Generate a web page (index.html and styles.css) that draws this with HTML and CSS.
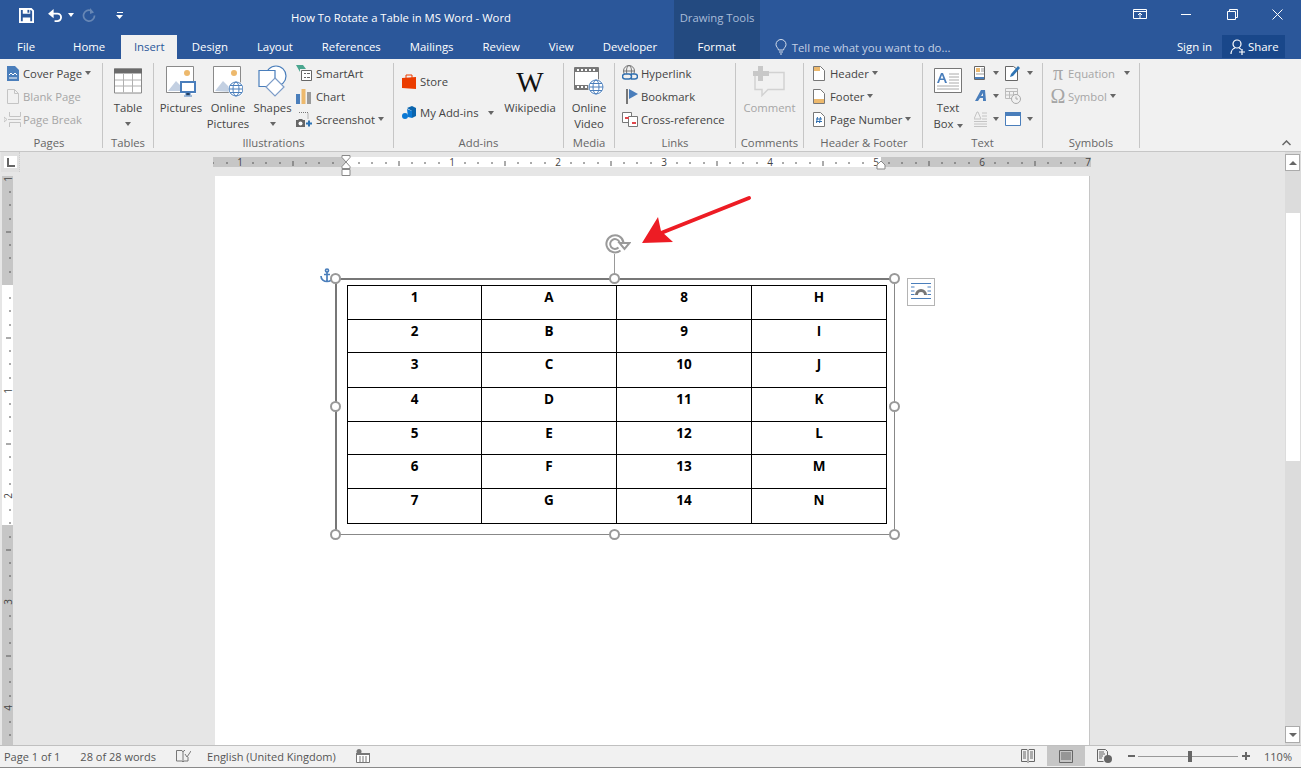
FILE: index.html
```html
<!DOCTYPE html>
<html lang="en">
<head>
  <meta charset="UTF-8">
  <title>How To Rotate a Table in MS Word - Word</title>
  <link rel="stylesheet" href="styles.css">
</head>
<body>
  <div class="titlebar">
    <div class="qat">
      <svg class="qat-save" width="15" height="15" viewBox="0 0 16 16"><path d="M1 1h12l2 2v12H1z" fill="none" stroke="#fff" stroke-width="2"/><path d="M4 1h8v5H4zM4 10h8v5H4z" fill="#fff"/><path d="M9 2h2v3H9z" fill="#2b579a"/></svg>
      <svg class="qat-undo" width="15" height="13" viewBox="0 0 16 14"><path d="M2 5h8a4 4 0 0 1 0 8H7" fill="none" stroke="#fff" stroke-width="2"/><path d="M6 0v10L0 5z" fill="#fff"/></svg>
      <span class="caret caret-white qat-caret"></span>
      <svg class="qat-redo" width="14" height="14" viewBox="0 0 14 14"><path d="M9 2.500a5.500 5.500 0 1 0 3.500 5" fill="none" stroke="#6787b5" stroke-width="1.700"/><path d="M8 0v6l4-1.500z" fill="#6787b5"/></svg>
      <svg class="qat-more" width="8" height="8" viewBox="0 0 8 8"><path d="M1 1h6v1H1zM0 4h7L3.500 8z" fill="#fff"/></svg>
    </div>
    <div class="doc-title">How To Rotate a Table in MS Word - Word</div>
    <div class="context-title">Drawing Tools</div>
    <div class="window-buttons">
      <svg width="14" height="11" viewBox="0 0 14 11"><path d="M.5.500h13v9H.5zM1 2.500h12M7 9V4.500M5 6l2-2 2 2" fill="none" stroke="#fff"/></svg>
      <svg width="11" height="11" viewBox="0 0 11 11"><path d="M0 5.500h10" stroke="#fff"/></svg>
      <svg width="11" height="11" viewBox="0 0 11 11"><path d="M.5 2.500h8v8h-8zM2.500 2V.500h8v8H9" fill="none" stroke="#fff"/></svg>
      <svg width="11" height="11" viewBox="0 0 11 11"><path d="M.5.500l10 10M10.500.500l-10 10" stroke="#fff"/></svg>
    </div>
  </div>

  <div class="tabs">
    <span class="tab tab-file">File</span>
    <span class="tab">Home</span>
    <span class="tab active">Insert</span>
    <span class="tab">Design</span>
    <span class="tab">Layout</span>
    <span class="tab">References</span>
    <span class="tab">Mailings</span>
    <span class="tab">Review</span>
    <span class="tab">View</span>
    <span class="tab">Developer</span>
    <span class="tab tab-format">Format</span>
    <span class="tell-me">
      <svg width="12" height="16" viewBox="0 0 12 16"><path d="M3.500 11C3 8.500 1 8 1 5.500a5 5 0 0 1 10 0C11 8 9 8.500 8.500 11zM4 13h4M5 15h2" fill="none" stroke="#d5deeb"/></svg>
      Tell me what you want to do...
    </span>
    <span class="sign-in">Sign in</span>
    <span class="share">
      <svg width="15" height="16" viewBox="0 0 15 16"><circle cx="7" cy="5" r="4" fill="none" stroke="#fff" stroke-width="1.200"/><path d="M1 15c0-3 2-5.500 4-6M9 9c.8.300 1.500.800 2 1.500M9 13h6M12 10v6" fill="none" stroke="#fff" stroke-width="1.200"/></svg>
      Share
    </span>
  </div>

  <div class="ribbon">
    <div class="group group-pages">
      <div class="group-body">
        <div class="stack">
          <div class="small"><svg class="ico" width="12" height="15" viewBox="0 0 12 15"><path d="M0 0h8l4 4v11H0z" fill="#4a7ebb"/><path d="M2 9l2-2 2 2 2-2 2 2M2 12h8" fill="none" stroke="#fff"/></svg>Cover Page<span class="caret"></span></div>
          <div class="small off"><svg class="ico" width="12" height="15" viewBox="0 0 12 15"><path d="M.5.500h7l4 4v10H.500z" fill="none" stroke="#c4c4c4"/><path d="M7.500.500v4h4" fill="none" stroke="#c4c4c4"/></svg>Blank Page</div>
          <div class="small off"><svg class="ico ico-break" width="18" height="15" viewBox="0 0 18 15"><path d="M5.500 0v4.500h11V0M5.500 15v-4.500h11V15M4 7.500h13M0 5l3 2.500L0 10z" fill="none" stroke="#c4c4c4"/></svg>Page Break</div>
        </div>
      </div>
      <div class="group-label">Pages</div>
    </div>

    <div class="group group-tables">
      <div class="group-body center">
        <div class="large">
          <svg class="big" width="28" height="25" viewBox="0 0 28 25"><path d="M.5.500h27v24H.5z" fill="#fff" stroke="#8a8a8a"/><path d="M0 0h28v5H0z" fill="#6a6a6a"/><path d="M9.500 5v19M18.500 5v19M1 11.500h26M1 17.500h26" stroke="#b0b0b0"/></svg>
          <span>Table</span>
          <span class="caret caret-line"></span>
        </div>
      </div>
      <div class="group-label">Tables</div>
    </div>

    <div class="group group-illus">
      <div class="group-body">
        <div class="large large-pictures">
          <svg class="big" width="30" height="32" viewBox="0 0 30 32"><path d="M.5.500h27v26H.5z" fill="#fff" stroke="#8a8a8a"/><circle cx="21" cy="7" r="3" fill="#edb96d"/><path d="M2 25l8-10 6 6 3-2 3 6z" fill="#c3d0e2"/><path d="M14 15h16v13H14z" fill="#fff"/><path d="M15 16h14v10H15z" fill="#fff" stroke="#4a7ebb" stroke-width="2"/><path d="M20 29h4v-2h-4zM18 30h8" stroke="#4a7ebb"/></svg>
          <span>Pictures</span>
        </div>
        <div class="large large-online">
          <svg class="big" width="30" height="32" viewBox="0 0 30 32"><path d="M.5.500h27v26H.5z" fill="#fff" stroke="#8a8a8a"/><circle cx="21" cy="7" r="3" fill="#edb96d"/><path d="M2 25l8-10 6 6 3 5z" fill="#c3d0e2"/><circle cx="23" cy="23" r="8" fill="#fff"/><g fill="none" stroke="#4a7ebb"><circle cx="23" cy="23" r="7"/><ellipse cx="23" cy="23" rx="3" ry="7"/><path d="M16 23h14M17 19.500h12M17 26.500h12"/></g></svg>
          <span>Online</span><span>Pictures</span>
        </div>
        <div class="large large-shapes">
          <svg class="big" width="30" height="32" viewBox="0 0 30 32"><circle cx="18" cy="11" r="10" fill="#fff" stroke="#4a7ebb" stroke-width="1.200"/><path d="M1 5.500h16v16H1z" fill="#fff" stroke="#4a7ebb" stroke-width="1.200"/><path d="M17 13l9 9-9 9-9-9z" fill="#fff" stroke="#7c9cc8" stroke-width="1.200"/></svg>
          <span>Shapes</span>
          <span class="caret caret-line"></span>
        </div>
        <div class="stack">
          <div class="small"><svg class="ico" width="16" height="16" viewBox="0 0 16 16"><path d="M0 0h7l3 4H4v3z" fill="#4aa68f"/><path d="M5.500 5.500h10v10h-10z" fill="#fff" stroke="#666"/><path d="M8 8.500h2M11 8.500h3M8 12.500h2M11 12.500h3" stroke="#666"/></svg>SmartArt</div>
          <div class="small"><svg class="ico ico-15" width="15" height="15" viewBox="0 0 15 15"><path d="M0 5h4v10H0z" fill="#4a7ebb"/><path d="M5.500 0h4v15h-4z" fill="#edb96d"/><path d="M11 3h4v12h-4z" fill="#9a9a9a"/></svg>Chart</div>
          <div class="small"><svg class="ico" width="16" height="15" viewBox="0 0 16 15"><path d="M3 .500h9v6" fill="none" stroke="#777" stroke-dasharray="1 1"/><path d="M0 8h2l1-1h3l1 1h2v7H0z" fill="#666"/><circle cx="4.500" cy="11.500" r="2" fill="#fff"/><path d="M10 11.500h6M13 8.500v6" stroke="#2f75b5" stroke-width="2"/></svg>Screenshot<span class="caret"></span></div>
        </div>
      </div>
      <div class="group-label">Illustrations</div>
    </div>

    <div class="group group-addins">
      <div class="group-body">
        <div class="stack stack-addins">
          <div class="small"><svg class="ico" width="14" height="16" viewBox="0 0 14 16"><path d="M0 4l14-1v12L0 14z" fill="#eb3c00"/><path d="M4 4V1h6v3" fill="none" stroke="#eb3c00"/></svg>Store</div>
          <div class="small"><svg class="ico" width="14" height="14" viewBox="0 0 14 14"><path d="M5 2l5-2 4 2v8l-4 2V5z" fill="#0a64ad"/><path d="M5 3l5 2v7L6 11z" fill="#0a78d4"/><circle cx="3" cy="10" r="3" fill="#0a78d4"/></svg>My Add-ins<span class="caret caret-far"></span></div>
        </div>
        <div class="large large-wiki">
          <div class="wiki-w">W</div>
          <span>Wikipedia</span>
        </div>
      </div>
      <div class="group-label">Add-ins</div>
    </div>

    <div class="group group-media">
      <div class="group-body center">
        <div class="large">
          <svg class="big" width="30" height="28" viewBox="0 0 30 28"><path d="M.5.500h24v22H.5z" fill="#fff" stroke="#777"/><path d="M1 1h23v4H1zM1 18h23v4H1z" fill="#777"/><path d="M3 2h2v2H3zM7 2h2v2H7zM11 2h2v2h-2zM15 2h2v2h-2zM19 2h2v2h-2zM3 19h2v2H3zM7 19h2v2H7zM11 19h2v2h-2z" fill="#fff"/><circle cx="22" cy="20" r="8" fill="#fff"/><g fill="none" stroke="#4a7ebb"><circle cx="22" cy="20" r="7"/><ellipse cx="22" cy="20" rx="3" ry="7"/><path d="M15 20h14M16 16.500h12M16 23.500h12"/></g></svg>
          <span>Online</span><span>Video</span>
        </div>
      </div>
      <div class="group-label">Media</div>
    </div>

    <div class="group group-links">
      <div class="group-body">
        <div class="stack">
          <div class="small"><svg class="ico ico-link" width="16" height="16" viewBox="0 0 16 16"><g fill="none" stroke="#777"><circle cx="7" cy="6" r="5.500"/><ellipse cx="7" cy="6" rx="2.500" ry="5.500"/><path d="M1.500 6h11"/></g><path d="M3 9h4a2.500 2.500 0 0 1 0 5H3a2.500 2.500 0 0 1 0-5zM9 9h4a2.500 2.500 0 0 1 0 5H9" fill="#f1f1f1" stroke="#2f6fb0" stroke-width="1.500"/></svg>Hyperlink</div>
          <div class="small"><svg class="ico ico-bookmark" width="14" height="16" viewBox="0 0 14 16"><path d="M2 1v15" stroke="#777" stroke-width="2"/><path d="M4 1l9 5-9 5z" fill="#4a7ebb"/></svg>Bookmark</div>
          <div class="small"><svg class="ico ico-link" width="16" height="15" viewBox="0 0 16 15"><path d="M.5.500h9v10h-9z" fill="#fff" stroke="#777"/><path d="M6.500 4.500h9v10h-9z" fill="#fff" stroke="#777"/><path d="M3 5h4v2H3zM10 10h4v2h-4z" fill="#e0474c"/></svg>Cross-reference</div>
        </div>
      </div>
      <div class="group-label">Links</div>
    </div>

    <div class="group group-comments">
      <div class="group-body center">
        <div class="large off">
          <svg class="big" width="32" height="30" viewBox="0 0 32 30"><path d="M6 6.500h25v17H15l-6 6v-6H2v-14z" fill="none" stroke="#d2d2d2" stroke-width="1.500"/><path d="M5 1h5v5h6v5h-6v5H5v-5H0V6h5z" fill="#c8c8c8" transform="translate(0 -1)"/></svg>
          <span>Comment</span>
        </div>
      </div>
      <div class="group-label">Comments</div>
    </div>

    <div class="group group-hf">
      <div class="group-body">
        <div class="stack">
          <div class="small"><svg class="ico" width="12" height="15" viewBox="0 0 12 15"><path d="M.5.500h7l4 4v10H.500z" fill="#fff" stroke="#777"/><path d="M1 1h6v4H1z" fill="#edb96d"/></svg>Header<span class="caret"></span></div>
          <div class="small"><svg class="ico" width="12" height="15" viewBox="0 0 12 15"><path d="M.5.500h7l4 4v10H.500z" fill="#fff" stroke="#777"/><path d="M1 10h10v4H1z" fill="#edb96d"/></svg>Footer<span class="caret"></span></div>
          <div class="small"><svg class="ico" width="12" height="15" viewBox="0 0 12 15"><path d="M.5.500h7l4 4v10H.500z" fill="#fff" stroke="#777"/><path d="M4.500 5l-1 6M7.500 5l-1 6M3 7h6M3 9.500h6" stroke="#2f6fb0"/></svg>Page Number<span class="caret"></span></div>
        </div>
      </div>
      <div class="group-label">Header &amp; Footer</div>
    </div>

    <div class="group group-text">
      <div class="group-body">
        <div class="large large-textbox">
          <svg class="big" width="28" height="26" viewBox="0 0 28 26"><path d="M.5.500h27v24H.5z" fill="#fff" stroke="#777"/><path d="M15 6h10M15 9h10M15 12h10M15 15h10M3 18h22M3 21h22" stroke="#aaa"/><path d="M3 15L7 5h2l4 10h-2l-1-3H6l-1 3zM6.600 10.500h2.800L8 7z" fill="#4a7ebb"/></svg>
          <span>Text</span>
          <span>Box<span class="caret"></span></span>
        </div>
        <div class="text-tools">
          <div class="tool"><svg width="13" height="14" viewBox="0 0 13 14"><path d="M.5.500h10v13H.500z" fill="#fff" stroke="#666"/><path d="M2 2h4v4H2z" fill="#edb96d"/><path d="M7 3h3M7 5h3M2 8h8" stroke="#999"/><path d="M1 11h9v2H1z" fill="#4a7ebb"/></svg><span class="caret"></span></div>
          <div class="tool"><svg width="16" height="16" viewBox="0 0 16 16"><path d="M.5 1.500h8l4 3v11H.500z" fill="#fff" stroke="#666"/><path d="M5 12l1-3 7-8 2 2-7 8z" fill="#2f75b5"/></svg><span class="caret"></span></div>
          <div class="tool"><svg width="13" height="14" viewBox="0 0 13 14"><path d="M1 12L7 1h4l1 11h-3V9H6l-2 3zM7 7h2V4z" fill="#4a7ebb"/></svg><span class="caret"></span></div>
          <div class="tool off"><svg width="16" height="16" viewBox="0 0 16 16"><path d="M.5.500h12v10H.500zM.5 3.500h12M4.500 4v6M8.500 4v6M1 7h11" fill="none" stroke="#bbb"/><circle cx="11" cy="11" r="4.500" fill="#f1f1f1" stroke="#aaa"/><path d="M11 8.500V11h2" fill="none" stroke="#aaa"/></svg></div>
          <div class="tool off"><svg width="13" height="16" viewBox="0 0 13 16"><path d="M0 8l3-7h1l3 7zM8 2h5M8 5h5M8 8h5M0 10.500h13M0 13h13M0 15.500h13" fill="none" stroke="#c4c4c4"/></svg><span class="caret"></span></div>
          <div class="tool"><svg width="16" height="14" viewBox="0 0 16 14"><path d="M.5.500h15v13H.500z" fill="#fff" stroke="#4a7ebb"/><path d="M0 0h16v4H0z" fill="#4a7ebb"/></svg><span class="caret"></span></div>
        </div>
      </div>
      <div class="group-label">Text</div>
    </div>

    <div class="group group-symbols">
      <div class="group-body">
        <div class="stack">
          <div class="small off"><span class="sym sym-pi">π</span>Equation<span class="caret caret-equation"></span></div>
          <div class="small off"><span class="sym">Ω</span>Symbol<span class="caret"></span></div>
        </div>
      </div>
      <div class="group-label">Symbols</div>
    </div>

    <svg class="collapse" width="9" height="6" viewBox="0 0 9 6"><path d="M.5 5l4-4 4 4" fill="none" stroke="#666" stroke-width="1.500"/></svg>
  </div>

  <div class="workspace">
    <div class="work-main">
      <div class="ruler-row">
        <div class="ruler-corner"><span class="corner-l"></span></div>
        <svg class="h-ruler" width="880" height="24" viewBox="0 0 880 24">
          <defs>
            <pattern id="hticks" width="106" height="24" patternUnits="userSpaceOnUse" patternTransform="translate(27 0)">
              <path d="M13 10v2M26 10v2M40 10v2M53 9v5M66 10v2M79 10v2M93 10v2" stroke="#555"/>
            </pattern>
          </defs>
          <path d="M0 5h133v10H0zM668 5h210v10H668z" fill="#c6c6c6"/>
          <path d="M133 5h535v10H133z" fill="#fff"/>
          <path d="M0 0h880v24H0z" fill="url(#hticks)"/>
          <g class="ruler-num" text-anchor="middle">
            <text x="27" y="14">1</text>
            <text x="239" y="14">1</text>
            <text x="345" y="14">2</text>
            <text x="451" y="14">3</text>
            <text x="557" y="14">4</text>
            <text x="663" y="14">5</text>
            <text x="769" y="14">6</text>
            <text x="875" y="14">7</text>
          </g>
          <path d="M129 3.500h8v2L133 10l4 4.500v2h-8v-2l4-4.500-4-4.500z" fill="#fff" stroke="#888"/>
          <path d="M129 17.500h8v6h-8z" fill="#fff" stroke="#888"/>
          <path d="M668 9l4 4v4h-8v-4z" fill="#fff" stroke="#888"/>
        </svg>
      </div>
      <div class="doc-row">
        <svg class="v-ruler" width="12" height="569" viewBox="0 0 12 569">
          <defs>
            <pattern id="vticks" width="12" height="106" patternUnits="userSpaceOnUse" patternTransform="translate(0 3)">
              <path d="M7 13h2M7 26h2M7 40h2M4 53h5M7 66h2M7 79h2M7 93h2" stroke="#555"/>
            </pattern>
          </defs>
          <path d="M0 0h11v109H0zM0 349h11v220H0z" fill="#c6c6c6"/>
          <path d="M0 109h11v240H0z" fill="#fff"/>
          <path d="M0 0h12v569H0z" fill="url(#vticks)"/>
          <g class="ruler-num" text-anchor="middle">
            <text transform="translate(10 3) rotate(-90)">1</text>
            <text transform="translate(10 215) rotate(-90)">1</text>
            <text transform="translate(10 320) rotate(-90)">2</text>
            <text transform="translate(10 426) rotate(-90)">3</text>
            <text transform="translate(10 532) rotate(-90)">4</text>
          </g>
        </svg>
        <div class="page">
          <div class="shape">
            <svg class="anchor" width="14" height="15" viewBox="0 0 14 15"><g fill="none" stroke="#4a7ebb" stroke-width="1.700"><circle cx="7" cy="2.500" r="1.500"/><path d="M7 4v10M1 8c0 3.500 3 5.500 6 5.500s6-2 6-5.500M4 6.500h6"/></g></svg>
            <div class="rotate-stem"></div>
            <svg class="rotate-handle" width="27" height="21" viewBox="0 0 27 21"><g fill="none" stroke="#9a9a9a" stroke-width="2"><path d="M19.500 8.500A8.600 8.600 0 1 0 16.500 16.500"/><path d="M15.500 8A4.900 4.900 0 1 0 14.500 13.500"/></g><path d="M15.500 9h10l-5 6z" fill="#fff" stroke="#9a9a9a" stroke-width="2"/></svg>
            <span class="handle h-tl"></span>
            <span class="handle h-tc"></span>
            <span class="handle h-tr"></span>
            <span class="handle h-ml"></span>
            <span class="handle h-mr"></span>
            <span class="handle h-bl"></span>
            <span class="handle h-bc"></span>
            <span class="handle h-br"></span>
            <div class="layout-options">
              <svg width="20" height="20" viewBox="0 0 20 20"><path d="M0 2.500h20M0 6h3.500M16.500 6H20M0 10h3.500M16.500 10H20M0 13.500h3.500M16.500 13.500H20M0 17.500h20" stroke="#4a7ebb"/><path d="M5.500 14a4.500 4.500 0 0 1 9 0" fill="none" stroke="#777" stroke-width="3"/></svg>
            </div>
            <table class="grid">
              <tr><td>1</td><td>A</td><td>8</td><td>H</td></tr>
              <tr><td>2</td><td>B</td><td>9</td><td>I</td></tr>
              <tr><td>3</td><td>C</td><td>10</td><td>J</td></tr>
              <tr><td>4</td><td>D</td><td>11</td><td>K</td></tr>
              <tr><td>5</td><td>E</td><td>12</td><td>L</td></tr>
              <tr><td>6</td><td>F</td><td>13</td><td>M</td></tr>
              <tr><td>7</td><td>G</td><td>14</td><td>N</td></tr>
            </table>
          </div>
          <svg class="arrow" width="125" height="60" viewBox="0 0 125 60"><path d="M122 3L34 38" stroke="#ed1c24" stroke-width="4" stroke-linecap="round"/><path d="M15 48L31 22l3 14 12 11z" fill="#ed1c24"/></svg>
        </div>
      </div>
    </div>
    <div class="scrollbar">
      <div class="sb-btn"><span class="sb-up"></span></div>
      <div class="sb-thumb"></div>
      <div class="sb-btn sb-btn-end"><span class="sb-down"></span></div>
    </div>
  </div>

  <div class="statusbar">
    <span class="st-page">Page 1 of 1</span>
    <span class="st-words">28 of 28 words</span>
    <svg class="st-book" width="15" height="13" viewBox="0 0 15 13"><path d="M.5.500H6l1 1.500v10l-1-1H.500zM7 2l1-1.500h1M7 12l1-1h4V7" fill="none" stroke="#777"/><path d="M9 4l2 3 4-6" fill="none" stroke="#777"/></svg>
    <span class="st-lang">English (United Kingdom)</span>
    <svg class="st-macro" width="14" height="14" viewBox="0 0 14 14"><circle cx="3" cy="2.500" r="2.500" fill="#777"/><path d="M2 4.500h11.500v9H.500v-9z" fill="#fff" stroke="#777"/><path d="M0 4h14v2H0z" fill="#777"/><path d="M3 8h2M6 8h2M9 8h2M3 10h2M6 10h2M9 10h2M3 12h2M6 12h2M9 12h2" stroke="#777"/></svg>
    <div class="st-right">
      <svg class="st-read" width="14" height="14" viewBox="0 0 14 14"><path d="M.5.500H6l1 1 1-1h5.500v12H8l-1 1-1-1H.500zM7 1.500v11M2 3h3M2 5h3M2 7h3M2 9h3M9 3h3M9 5h3M9 7h3M9 9h3" fill="none" stroke="#666"/></svg>
      <span class="st-print"><svg width="14" height="13" viewBox="0 0 14 13"><path d="M.5.500h13v12H.500z" fill="#c6c6c6" stroke="#666"/><path d="M2 3h10M2 5h10M2 7h10M2 9h10" stroke="#666"/></svg></span>
      <svg class="st-web" width="15" height="14" viewBox="0 0 15 14"><path d="M.5.500h8l2 2v5M.5.500v12h6M2 3h5M2 5h6M2 7h4M2 9h3" fill="none" stroke="#666"/><circle cx="11" cy="10" r="4" fill="#666"/></svg>
      <span class="zoom-sign zoom-minus"></span>
      <div class="zoom-track"><span class="zoom-thumb"></span></div>
      <span class="zoom-sign zoom-plus"></span>
      <span class="st-zoom">110%</span>
    </div>
  </div>
</body>
</html>
```

FILE: styles.css
```css
* {
  box-sizing: border-box;
}

html, body {
  margin: 0;
  padding: 0;
}

body {
  width: 1301px;
  height: 768px;
  overflow: hidden;
  display: flex;
  flex-direction: column;
  font-family: "Open Sans", "Noto Sans", sans-serif;
  font-size: 11.3px;
  color: #444;
  background-color: #e6e6e6;
}

svg {
  display: block;
  flex: none;
}

/* title bar */
.titlebar {
  height: 35px;
  display: flex;
  background-color: #2b579a;
  color: #fff;
}

.qat {
  width: 291px;
  display: flex;
  align-items: center;
  padding: 0 0 5px 19px;
}

.qat-undo {
  margin-left: 14px;
}

.qat-caret {
  margin-left: 5px;
}

.qat-redo {
  margin-left: 8px;
}

.qat-more {
  margin-left: 20px;
}

.doc-title {
  width: 383px;
  line-height: 35px;
}

.context-title {
  width: 86px;
  background-color: #234a80;
  color: #a9bcd8;
  text-align: center;
  line-height: 35px;
}

.window-buttons {
  margin-left: auto;
  display: flex;
  align-items: center;
  width: 168px;
  justify-content: space-between;
  padding-right: 18px;
  padding-bottom: 6px;
}

/* tabs */
.tabs {
  height: 24px;
  display: flex;
  align-items: stretch;
  background-color: #2b579a;
  color: #fff;
  font-size: 11.4px;
}

.tab {
  padding: 0 14.5px;
  line-height: 24px;
}

.tab-file {
  padding: 0 23.5px 0 17px;
}

.active {
  width: 56px;
  padding: 0;
  margin: 0 0 0 1.5px;
  text-align: center;
  background-color: #f1f1f1;
  color: #2b579a;
}

.tab-format {
  width: 86px;
  margin-left: 2px;
  padding: 0;
  text-align: center;
  background-color: #234a80;
}

.tell-me {
  margin-left: 15px;
  display: flex;
  align-items: center;
  gap: 5px;
  color: #c3d0e4;
}

.sign-in {
  margin-left: auto;
  line-height: 24px;
}

.share {
  margin: 0 16px 1px 10px;
  width: 63px;
  display: flex;
  align-items: center;
  gap: 3px;
  padding-left: 8px;
  background-color: #19478a;
}

/* ribbon */
.ribbon {
  height: 93px;
  display: flex;
  position: relative;
  background-color: #f1f1f1;
  border-bottom: 1px solid #c6c6c6;
}

.group {
  position: relative;
  display: flex;
  flex-direction: column;
  padding-top: 3px;
  border-right: 1px solid #c6c6c6;
  margin-top: 4px;
  height: 85px;
}

.group-pages { width: 103px; padding-left: 7px; }
.group-tables { width: 51px; }
.group-illus { width: 240px; }
.group-addins { width: 170px; }
.group-media { width: 51px; }
.group-links { width: 121px; padding-left: 7px; }
.group-comments { width: 68px; }
.group-hf { width: 119px; padding-left: 9px; }
.group-text { width: 120px; }
.group-symbols { width: 97px; padding-left: 7px; }

.group-body {
  flex: none;
  height: 73px;
  display: flex;
  margin-top: -4px;
}

.center {
  justify-content: center;
}

.group-label {
  height: 15px;
  line-height: 15px;
  text-align: center;
  color: #666;
}

.group-links .group-label,
.group-hf .group-label,
.group-symbols .group-label {
  margin-left: -7px;
}

.group-pages .group-label {
  margin-left: -11px;
}

.stack {
  display: flex;
  flex-direction: column;
  margin-top: -0.5px;
}

.small {
  height: 23px;
  display: flex;
  align-items: center;
  white-space: nowrap;
}

.small .ico {
  margin-right: 4px;
}

.small .ico-break {
  margin: 0 1px 0 -3px;
}

.small .ico-15 {
  margin-right: 5px;
}

.group-links .ico-link {
  margin-right: 3px;
}

.group-links .ico-bookmark {
  margin: 0 2px 0 3px;
}

.group-hf .ico {
  margin-right: 5px;
}

.large {
  display: flex;
  flex-direction: column;
  align-items: center;
  line-height: 16px;
  padding-top: 3px;
  white-space: nowrap;
}

.large .big {
  height: 32px;
  margin-bottom: 3px;
}

.large-pictures .big,
.large-online .big {
  margin: 1px 0 2px;
}

.off {
  color: #a6a6a6;
}

.caret {
  display: inline-block;
  width: 0;
  height: 0;
  margin-left: 3px;
  border-left: 3.5px solid transparent;
  border-right: 3.5px solid transparent;
  border-top: 4px solid #666;
}

.caret-white {
  border-top-color: #fff;
  margin-left: 5px;
}

.caret-line {
  margin: 6px 0 0;
}

.caret-far {
  margin-left: 9px;
}

.caret-equation {
  margin-left: 9px;
}

.large-pictures { margin-left: 6px; width: 42px; }
.large-online { margin-left: 5px; width: 42px; }
.large-shapes { margin-left: 5px; width: 37px; }
.group-illus .stack { margin-left: 5px; }

.stack-addins {
  margin: 8px 0 0 8px;
  width: 102px;
  gap: 8px;
}

.large-wiki {
  width: 52px;
}

.wiki-w {
  height: 32px;
  margin-bottom: 3px;
  padding-top: 2px;
  font-family: "Liberation Serif", serif;
  font-size: 29px;
  line-height: 30px;
  color: #111;
}

.large-textbox {
  width: 50px;
}

.text-tools {
  display: grid;
  grid-template-columns: 31px 36px;
  grid-auto-rows: 23px;
  margin: -0.5px 0 0 1px;
}

.tool {
  display: flex;
  align-items: center;
}

.tool .caret {
  margin-left: 6px;
}

.sym {
  width: 16px;
  margin-right: 2px;
  font-family: "Liberation Serif", serif;
  font-size: 20px;
  line-height: 20px;
  text-align: center;
}

.collapse {
  position: absolute;
  right: 10px;
  bottom: 5px;
}

/* document area */
.workspace {
  flex: 1;
  display: flex;
  min-height: 0;
}

.work-main {
  flex: 1;
  display: flex;
  flex-direction: column;
  min-width: 0;
}

.ruler-row {
  height: 24px;
  display: flex;
}

.ruler-corner {
  width: 19px;
  height: 20px;
  margin-left: 1px;
  padding: 4px 3px;
  background-color: #e0e0e0;
  border-right: 1px dotted #ccc;
}

.corner-l {
  display: block;
  width: 13px;
  height: 12px;
  background-color: #fff;
  position: relative;
}

.corner-l::after {
  content: "";
  position: absolute;
  left: 3px;
  top: 2px;
  width: 6px;
  height: 7px;
  border-left: 2px solid #666;
  border-bottom: 2px solid #666;
}

.h-ruler {
  margin-left: 193px;
}

.ruler-num {
  font-size: 10px;
  fill: #444;
}

.doc-row {
  flex: 1;
  display: flex;
  min-height: 0;
}

.v-ruler {
  margin-left: 2px;
}

.page {
  position: relative;
  width: 875px;
  margin-left: 201px;
  padding: 102px 0 0 120px;
  background-color: #fff;
  border-right: 1px solid #c6c6c6;
  overflow: hidden;
}

.shape {
  position: relative;
  width: 560px;
  height: 257px;
  padding: 5px 0 0 10px;
  border: 1px solid #888;
  border-top: 2px solid #777;
  border-left: 2px solid #777;
}

.handle {
  position: absolute;
  width: 11px;
  height: 11px;
  background-color: #fff;
  border: 2px solid #999;
  border-radius: 50%;
}

.h-tl { left: -7px; top: -7px; }
.h-tc { left: 272px; top: -7px; }
.h-tr { right: -6px; top: -7px; }
.h-ml { left: -7px; top: 121px; }
.h-mr { right: -6px; top: 121px; }
.h-bl { left: -7px; bottom: -6px; }
.h-bc { left: 272px; bottom: -6px; }
.h-br { right: -6px; bottom: -6px; }

.anchor {
  position: absolute;
  left: -17px;
  top: -12px;
}

.rotate-stem {
  position: absolute;
  left: 277px;
  top: -26px;
  width: 1px;
  height: 20px;
  background-color: #999;
}

.rotate-handle {
  position: absolute;
  left: 267px;
  top: -46px;
}

.layout-options {
  position: absolute;
  left: 570px;
  top: -2px;
  width: 28px;
  height: 28px;
  padding: 2px 3px;
  background-color: #fff;
  border: 1px solid #b4b4b4;
}

.arrow {
  position: absolute;
  left: 412px;
  top: 19px;
}

.grid {
  border-collapse: collapse;
  table-layout: fixed;
  width: 540px;
  font-weight: 700;
  font-size: 13.5px;
  color: #000;
}

.grid td:first-child {
  width: 134px;
}

.grid tr {
  height: 34px;
}

.grid tr:nth-child(2),
.grid tr:nth-child(5) {
  height: 33px;
}

.grid tr:nth-child(3),
.grid tr:nth-child(7) {
  height: 35px;
}

.grid td {
  padding: 2px 0 0;
  border: 1px solid #000;
  text-align: center;
  vertical-align: top;
  line-height: 18px;
}

/* scrollbar */
.scrollbar {
  width: 16px;
  display: flex;
  flex-direction: column;
  padding-top: 2px;
  background-color: #dcdcdc;
}

.sb-btn {
  height: 17px;
  margin-right: 1px;
  background-color: #fff;
  border: 1px solid #ababab;
  display: flex;
  align-items: center;
  justify-content: center;
}

.sb-btn-end {
  margin-top: auto;
  margin-bottom: 2px;
}

.sb-up {
  border-left: 4px solid transparent;
  border-right: 4px solid transparent;
  border-bottom: 4px solid #666;
}

.sb-down {
  border-left: 4px solid transparent;
  border-right: 4px solid transparent;
  border-top: 4px solid #666;
}

.sb-thumb {
  height: 248px;
  margin: 42px 1px 0 1px;
  background-color: #fff;
}

/* status bar */
.statusbar {
  height: 23px;
  display: flex;
  align-items: center;
  padding: 0 0 1px 4px;
  background-color: #f1f1f1;
  border-top: 1px solid #c0c0c0;
  border-bottom: 1px solid #8a8a8a;
  font-size: 11px;
  color: #555;
}

.st-words { margin-left: 20px; }
.st-book { margin-left: 20px; }
.st-lang { margin-left: 16px; }
.st-macro { margin-left: 20px; }

.st-right {
  margin-left: auto;
  height: 100%;
  display: flex;
  align-items: center;
}

.st-print {
  width: 38px;
  height: 100%;
  margin-left: 12px;
  display: flex;
  align-items: center;
  justify-content: center;
  background-color: #c6c6c6;
}

.st-web {
  margin-left: 12px;
}

.zoom-sign {
  position: relative;
  width: 7px;
  height: 2px;
  background-color: #666;
}

.zoom-minus {
  margin-left: 16px;
}

.zoom-plus {
  margin-left: 4px;
  width: 8px;
}

.zoom-plus::after {
  content: "";
  position: absolute;
  left: 3px;
  top: -3px;
  width: 2px;
  height: 8px;
  background-color: #666;
}

.zoom-track {
  position: relative;
  width: 100px;
  height: 1px;
  margin-left: 3px;
  background-color: #999;
}

.zoom-thumb {
  position: absolute;
  left: 50px;
  top: -5px;
  width: 4px;
  height: 11px;
  background-color: #666;
}

.st-zoom {
  margin-left: 14px;
  margin-right: 9px;
}
```
